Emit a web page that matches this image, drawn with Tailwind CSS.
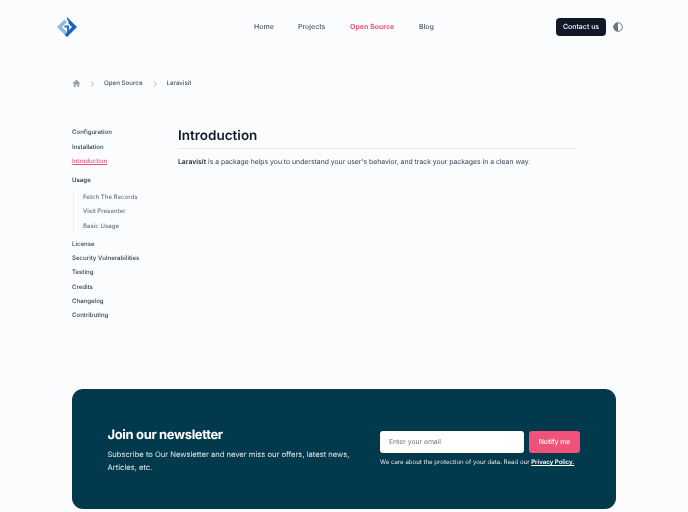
<!doctype html>
<html><head><meta charset="utf-8"><script src="https://cdn.jsdelivr.net/npm/@tailwindcss/browser@4"></script></head>
<body class="bg-[#fafcfe] font-['Inter',sans-serif] text-[#1f2937] overflow-hidden [text-rendering:geometricPrecision] antialiased">
<div class="w-[688px] h-[512px] overflow-hidden will-change-transform">
<header class="h-[54px] flex items-center pl-[57px] pr-[65px]">
  <svg class="w-[20px] h-[20px]" viewBox="0 0 20 20"><path d="M10 0L20 10L10 20L7.500 17.500L15 10L11.500 6.500V4L10 2.500Z" fill="#1565b8"/><path d="M10 0L0 10L7.500 17.500L10 15L5 10L10 5L7.500 2.500Z" fill="#8db8e3"/><path d="M7.500 8.500H12V14.500L10 15V10.500H7.500Z" fill="#1f6fc2"/></svg>
  <nav class="flex text-[7px] font-medium text-[#4b5563] ml-[177px] w-[302px]">
    <a class="w-[44px]">Home</a><a class="w-[52px]">Projects</a><a class="w-[69px] font-bold text-[#f0527a]">Open Source</a><a>Blog</a>
  </nav>
  <a class="h-[18px] w-[50px] rounded-[4px] bg-[#111827] text-white text-[7px] font-medium flex items-center justify-center">Contact us</a>
  <svg class="w-[10px] h-[10px] ml-[7px]" viewBox="0 0 10 10"><circle cx="5" cy="5" r="4.300" fill="none" stroke="#6b7280" stroke-width="1"/><path d="M5 .7a4.300 4.300 0 0 0 0 8.600Z" fill="#6b7280"/></svg>
</header>
<div class="pl-[72px] w-[616px]">
  <div class="mt-[24px] h-[11px] flex items-center text-[6.200px] font-medium text-[#4b5563]">
    <svg class="w-[9px] h-[9px]" viewBox="0 0 20 20" fill="#9ca3af"><path d="M10 1L1 10h3v8h4v-5h4v5h4v-8h3z"/></svg>
    <svg class="w-[6px] h-[6px] ml-[8px]" viewBox="0 0 6 6" fill="none" stroke="#9ca3af" stroke-width=".8"><path d="M2 .5L4.500 3L2 5.500"/></svg>
    <span class="ml-[9px]">Open Source</span>
    <svg class="w-[6px] h-[6px] ml-[9px]" viewBox="0 0 6 6" fill="none" stroke="#9ca3af" stroke-width=".8"><path d="M2 .5L4.500 3L2 5.500"/></svg>
    <span class="ml-[9px]">Laravisit</span>
  </div>
  <div class="flex mt-[37px] h-[199px]">
    <aside class="w-[106px] text-[6.100px] font-medium text-[#374151] flex flex-col">
      <a class="h-[14px] leading-[14px]">Configuration</a>
      <a class="h-[15px] leading-[15px]">Installation</a>
      <a class="h-[14px] leading-[14px] text-[#f0527a] underline">Introduction</a>
      <a class="h-[22px] leading-[23px] font-semibold">Usage</a>
      <div class="ml-[1px] mb-[4px] pl-[9px] border-l border-[#f0f1f4] text-[#6b7280]">
        <div class="h-[14.300px] leading-[14px]">Fetch The Records</div>
        <div class="h-[14.300px] leading-[14px]">Visit Presenter</div>
        <div class="h-[14.300px] leading-[14px]">Basic Usage</div>
      </div>
      <a class="h-[14.300px] leading-[14px]">License</a>
      <a class="h-[14.300px] leading-[14px]">Security Vulnerabilities</a>
      <a class="h-[14.300px] leading-[14px]">Testing</a>
      <a class="h-[14.300px] leading-[14px]">Credits</a>
      <a class="h-[14.300px] leading-[14px]">Changelog</a>
      <a class="h-[14.300px] leading-[14px]">Contributing</a>
    </aside>
    <main class="w-[398px]">
      <h1 class="pt-[1px] text-[13.500px] leading-[18px] font-semibold text-[#111827] pb-[3px] border-b border-[#e5e7eb]">Introduction</h1>
      <p class="mt-[6px] text-[6.850px] leading-[13px] text-[#374151]"><b class="font-semibold text-[#1f2937]">Laravisit</b> is a package helps you to understand your user's behavior, and track your packages in a clean way.</p>
    </main>
  </div>
  <section class="mt-[64px] w-[544px] h-[120px] rounded-[11px] bg-[#02394d] text-white flex pl-[35.500px] pt-[36px]">
    <div class="w-[272.500px]">
      <h2 class="mt-[2px] text-[13px] leading-[16px] font-bold tracking-[-0.35px]">Join our newsletter</h2>
      <p class="mt-[5px] text-[7.600px] leading-[13px] text-[#e5e7eb] w-[250px]">Subscribe to Our Newsletter and never miss our offers, latest news, Articles, etc.</p>
    </div>
    <div>
      <div class="flex gap-[5px] mt-[6px]">
        <div class="w-[144px] h-[22px] rounded-[3px] bg-white text-[#6b7280] text-[6.800px] flex items-center pl-[9px]">Enter your email</div>
        <div class="w-[51px] h-[22px] rounded-[3px] bg-[#f0527a] text-white text-[6.800px] font-medium flex items-center justify-center">Notify me</div>
      </div>
      <p class="mt-[5px] text-[6.100px] leading-[10px] text-[#e5e7eb] whitespace-nowrap">We care about the protection of your data. Read our <b class="font-semibold text-white underline">Privacy Policy.</b></p>
    </div>
  </section>
</div>
</div>
</body></html>
